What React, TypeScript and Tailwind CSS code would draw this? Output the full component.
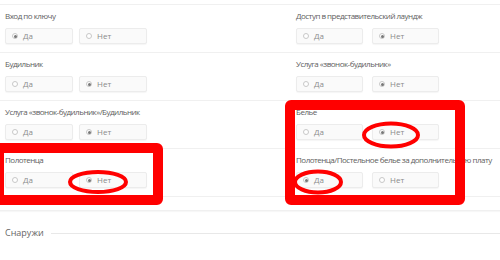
import React from "react";

interface Question {
  label: string;
  value: "yes" | "no";
}

const leftQuestions: Question[] = [
  { label: "Вход по ключу", value: "yes" },
  { label: "Будильник", value: "no" },
  { label: "Услуга «звонок-будильник»/Будильник", value: "no" },
  { label: "Полотенца", value: "no" },
];

const rightQuestions: Question[] = [
  { label: "Доступ в представительский лаундж", value: "no" },
  { label: "Услуга «звонок-будильник»", value: "no" },
  { label: "Белье", value: "no" },
  { label: "Полотенца/Постельное белье за дополнительную плату", value: "yes" },
];

function Radio({ text, checked, width }: { text: string; checked: boolean; width: string }) {
  return (
    <div className={"flex h-[16px] items-center rounded-[2px] border border-[#ececec] bg-[#fafafa] pl-[6px] shadow-[0_1px_1px_rgba(0,0,0,0.04)] " + width}>
      <span className="flex h-[6px] w-[6px] items-center justify-center rounded-full border border-[#c8c8c8] bg-white">
        {checked && <span className="h-[3px] w-[3px] rounded-full bg-[#777]" />}
      </span>
      <span className="ml-[5px] text-[8px] leading-none text-[#8a8a8a]">{text}</span>
    </div>
  );
}

function Row({ q, right }: { q: Question; right?: boolean }) {
  const w = right ? "w-[67px]" : "w-[68px]";
  return (
    <div className={"border-t border-[#f0f0f0] pb-[8px] pt-[5px] " + (right ? "pl-[6px]" : "pl-[5px]")}>
      <p className="mb-[6px] whitespace-nowrap text-[8px] leading-[12px] tracking-[-0.5px] text-[#606060]">{q.label}</p>
      <div className={"flex " + (right ? "gap-[9px]" : "gap-[6px]")}>
        <Radio text="Да" checked={q.value === "yes"} width={w} />
        <Radio text="Нет" checked={q.value === "no"} width={w} />
      </div>
    </div>
  );
}

export default function App() {
  return (
    <div className="relative h-[260px] w-[500px] overflow-hidden bg-white" style={{ fontFamily: "'Open Sans', 'Liberation Sans', sans-serif" }}>
      <div className="pt-[4px]">
        <div className="grid grid-cols-[290px_1fr] border-b border-[#f0f0f0] pb-[13px] shadow-[0_1px_1px_rgba(0,0,0,0.03)]">
          <div>
            {leftQuestions.map((q, i) => <Row key={i} q={q} />)}
            <div className="border-t border-[#f0f0f0]" />
          </div>
          <div>
            {rightQuestions.map((q, i) => <Row key={i} q={q} right />)}
            <div className="border-t border-[#f0f0f0]" />
          </div>
        </div>
        <div className="flex items-center pl-[5px] pt-[14px]">
          <span className="text-[9px] leading-[16px] text-[#666]">Снаружи</span>
          <div className="ml-[7px] h-px flex-1 bg-[#e8e8e8]" />
        </div>
      </div>

      {/* red annotation marks */}
      <div className="absolute left-[-6px] top-[143px] h-[62px] w-[169px] rounded-[6px] border-[10px] border-[#f00]" />
      <div className="absolute left-[285px] top-[100px] h-[105px] w-[180px] rounded-[6px] border-[10px] border-[#f00]" />
      <svg className="absolute left-0 top-0" width="500" height="260">
        <ellipse cx="98" cy="182" rx="28" ry="10" fill="none" stroke="#f00" strokeWidth="4" />
        <ellipse cx="391" cy="135" rx="27" ry="11.5" fill="none" stroke="#f00" strokeWidth="4" />
        <ellipse cx="318" cy="182" rx="23" ry="10.5" fill="none" stroke="#f00" strokeWidth="4" />
      </svg>
    </div>
  );
}
